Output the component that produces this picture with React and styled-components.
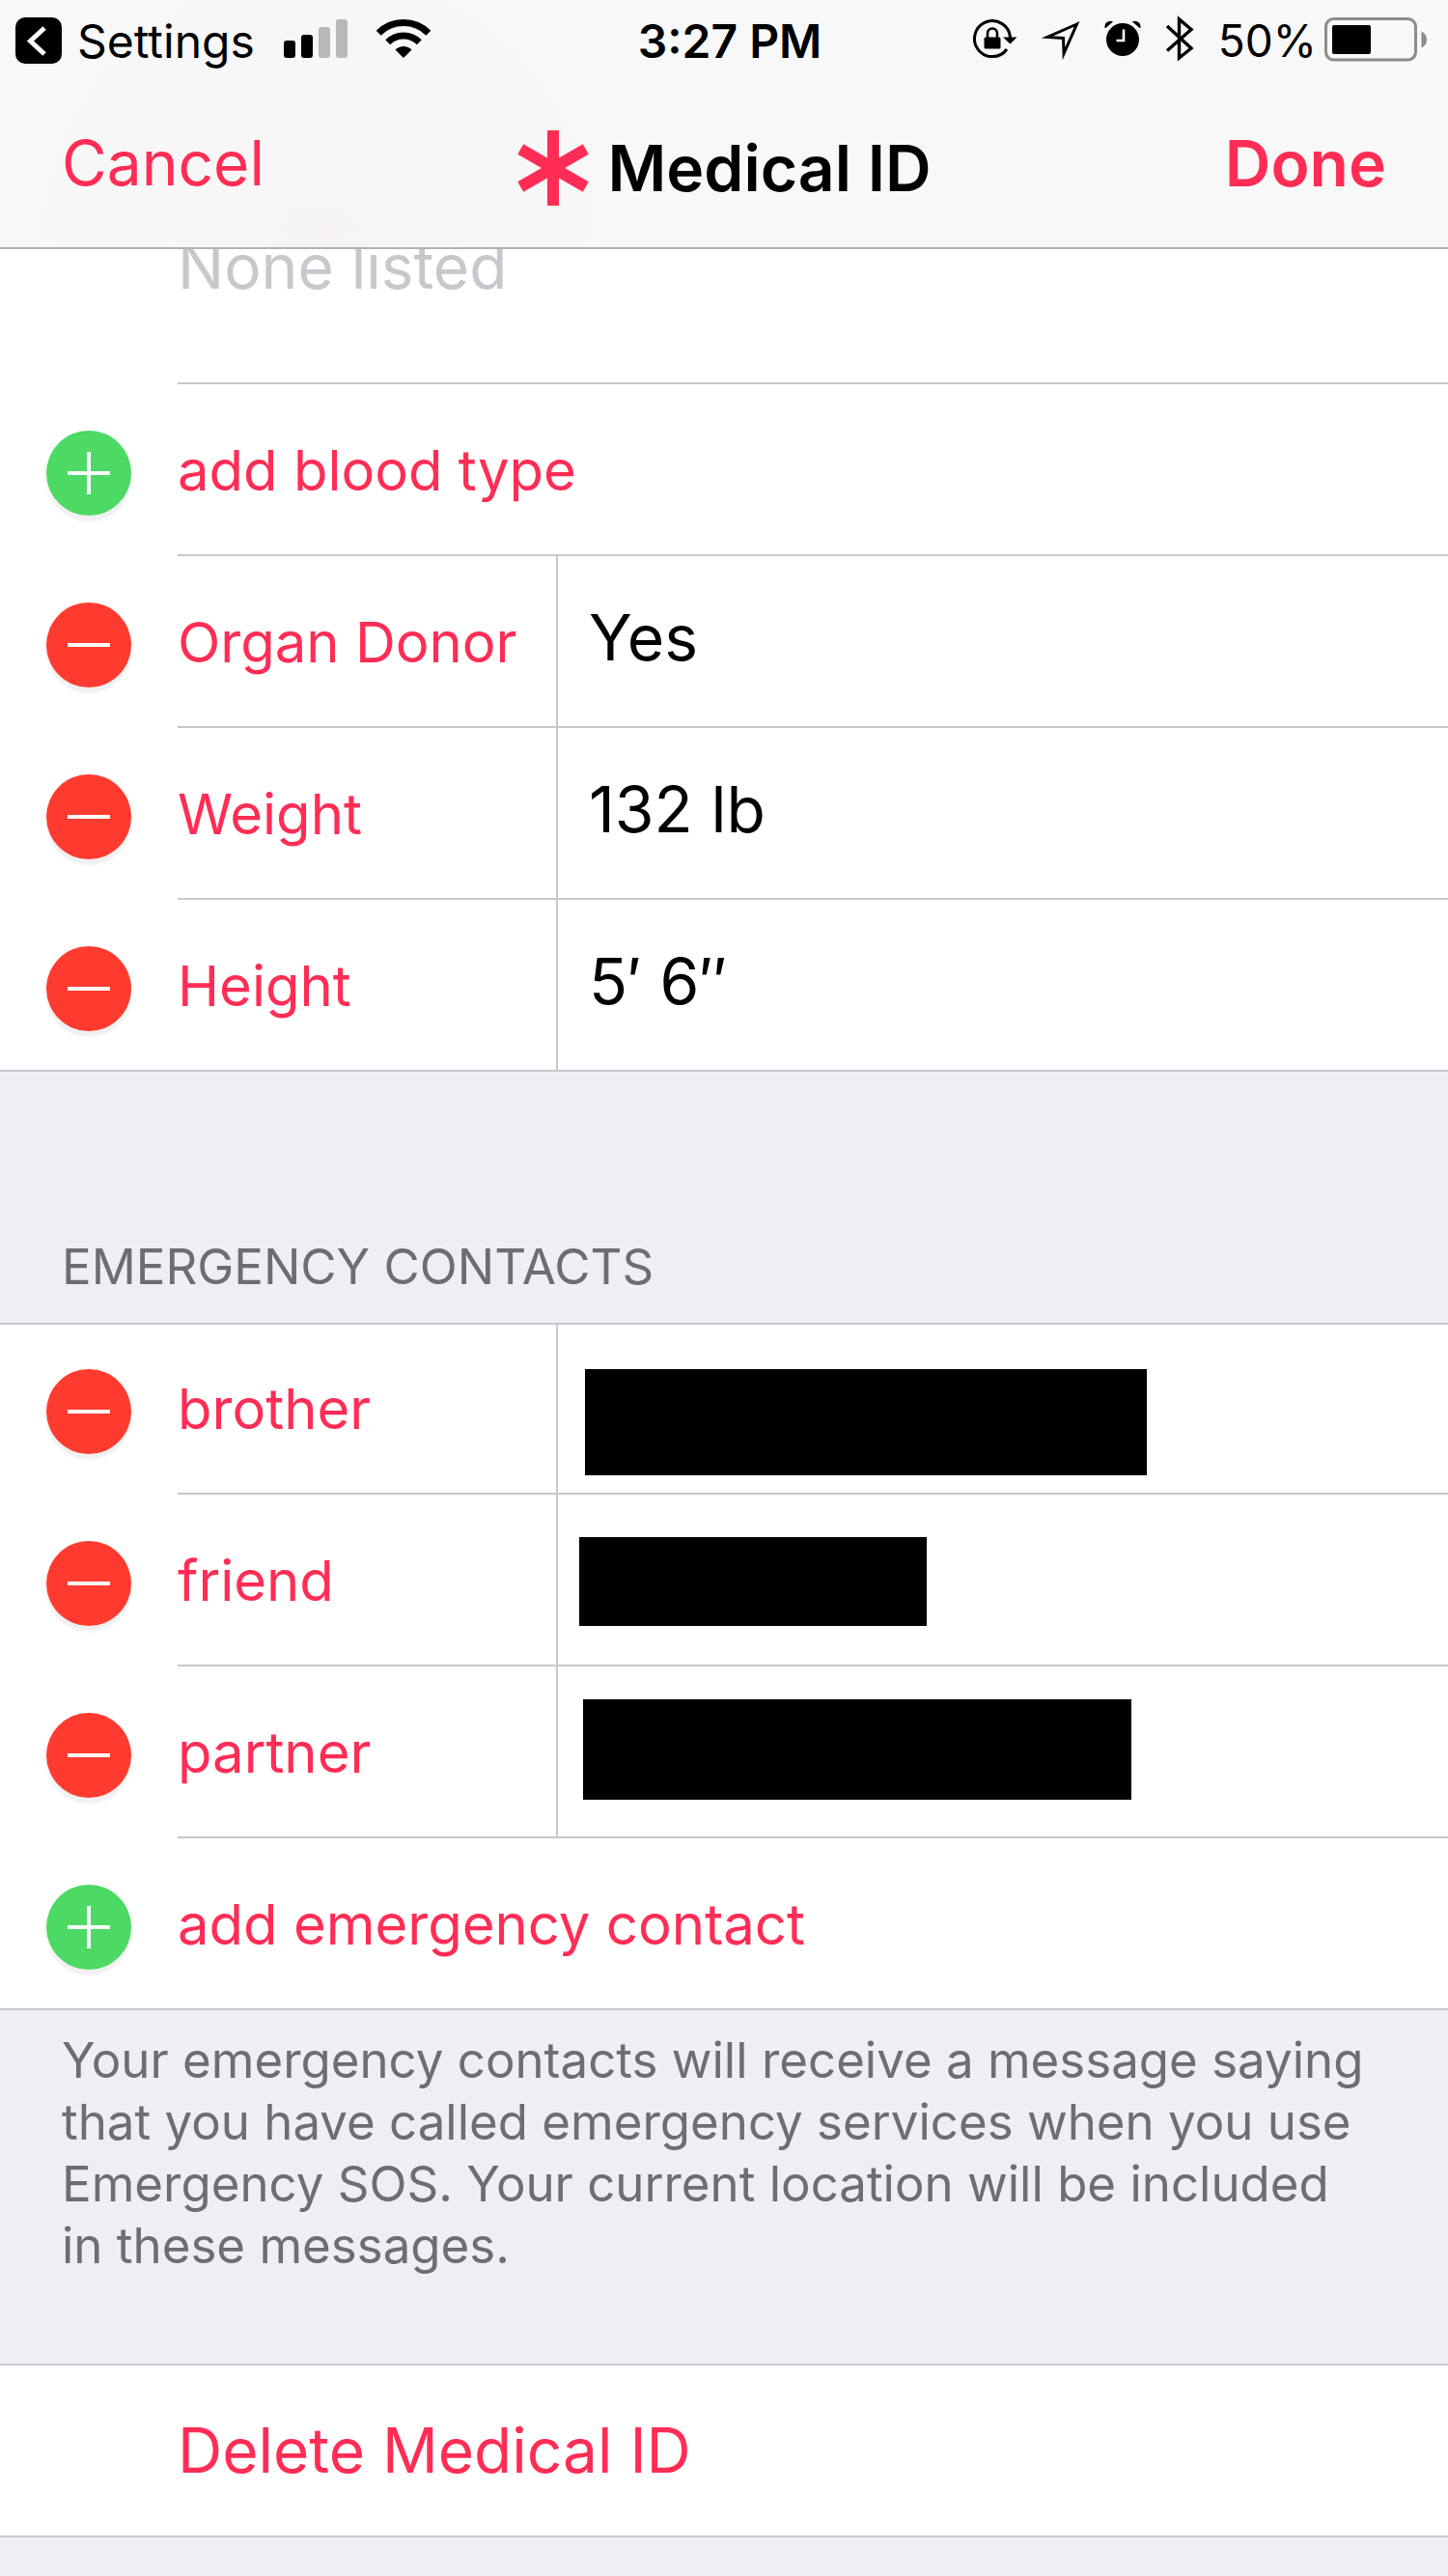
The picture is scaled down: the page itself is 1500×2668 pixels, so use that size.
import styled, { createGlobalStyle } from 'styled-components';

const GlobalStyle = createGlobalStyle`
  * {
    box-sizing: border-box;
  }
  body {
    margin: 0;
    background: #efeef4;
    font-family: Inter, 'Liberation Sans', sans-serif;
    color: #000;
  }
  button,
  input {
    font-family: inherit;
    border: none;
    background: none;
    padding: 0;
    margin: 0;
  }
  button {
    cursor: pointer;
  }
  svg {
    display: block;
    flex: none;
    overflow: visible;
  }
`;

const Header = styled.header`
  position: sticky;
  top: 0;
  z-index: 10;
  border-bottom: 2px solid #b2b2b4;
  background:
    radial-gradient(circle at 22% 100%, rgba(255, 45, 85, 0.02), transparent 320px),
    #f8f8f9;
`;

const StatusBar = styled.div`
  display: grid;
  grid-template-columns: 1fr auto 1fr;
  align-items: center;
  height: 84px;
  padding: 0 4px 0 16px;
  font-size: 48px;
`;

const StatusLeft = styled.div`
  display: flex;
  align-items: center;
  gap: 30px;
`;

const StatusRight = styled.div`
  display: flex;
  align-items: center;
  justify-content: flex-end;
  gap: 26px;
  padding-right: 18px;
`;

const BackLink = styled.a`
  display: flex;
  align-items: center;
  gap: 16px;
  color: #000;
  text-decoration: none;
`;

const Time = styled.time`
  font-weight: 600;
`;

const Battery = styled.div`
  display: flex;
  align-items: center;
  gap: 8px;
  font-size: 46px;
`;

const NavBar = styled.nav`
  display: grid;
  grid-template-columns: 1fr auto 1fr;
  align-items: center;
  height: 172px;
  padding: 0 64px 2px;
`;

const NavButton = styled.button`
  justify-self: ${({ $end }) => ($end ? 'end' : 'start')};
  font-size: ${({ $end }) => ($end ? 66 : 64)}px;
  font-weight: ${({ $end }) => ($end ? 600 : 400)};
  line-height: 80px;
  color: #ff2d55;
`;

const Title = styled.h1`
  display: flex;
  align-items: center;
  gap: 18px;
  margin: 0;
  padding-top: 10px;
  font-size: 66px;
  font-weight: 600;
  line-height: 80px;
`;

/* first row slides under the header, as if scrolled */
const Main = styled.main`
  margin-top: -38px;
`;

const Section = styled.section`
  background: #fff;
  box-shadow: inset 0 2px #c8c7cc;
`;

const Row = styled.div`
  display: grid;
  grid-template-columns: 184px 1fr;
  height: 178px;
  border-bottom: ${({ $last }) => ($last ? '2px solid #c8c7cc' : 'none')};
`;

const RowBody = styled.div`
  position: relative;
  display: flex;
  align-items: center;
  min-width: 0;
  border-bottom: ${({ $last }) => ($last ? 'none' : '2px solid #c8c7cc')};
`;

const Placeholder = styled.p`
  align-self: flex-start;
  margin: 0;
  padding-top: 16px;
  font-size: 64px;
  line-height: 80px;
  color: #c7c7cc;
`;

const RoundButton = styled.button`
  display: grid;
  place-items: center;
  width: 88px;
  height: 88px;
  margin: 48px 0 0 48px;
  border-radius: 50%;
  background: ${({ $add }) => ($add ? '#4cd964' : '#ff3b30')};
  box-shadow: 0 6px 3px #f0f0f0;
`;

const Label = styled.label`
  display: flex;
  align-items: center;
  flex: none;
  width: 394px;
  height: 100%;
  padding-top: 2px;
  border-right: 2px solid #c8c7cc;
  font-size: 58px;
  white-space: nowrap;
  color: #ff2d55;
`;

const AddButton = styled.button`
  padding-top: 2px;
  font-size: 58px;
  color: #ff2d55;
`;

const Value = styled.input`
  flex: 1;
  min-width: 0;
  height: 100%;
  padding: 0 32px 8px;
  font-size: 66px;
  color: #000;
  outline: none;
`;

/* marker stroke drawn over the contact's name */
const Redaction = styled.span`
  position: absolute;
  left: ${({ $x }) => $x}px;
  top: ${({ $y }) => $y}px;
  width: ${({ $w }) => $w}px;
  height: ${({ $h }) => $h}px;
  background: #000;
`;

const SectionTitle = styled.h2`
  margin: 0;
  padding: 170px 64px 26px;
  font-size: 51px;
  font-weight: 400;
  line-height: 64px;
  color: #6d6d72;
`;

const Note = styled.p`
  margin: 0;
  padding: 20px 84px 90px 64px;
  font-size: 51px;
  line-height: 64px;
  color: #6d6d72;
`;

const DeleteButton = styled.button`
  display: block;
  width: 100%;
  height: 180px;
  padding: 0 184px;
  border-bottom: 2px solid #c8c7cc;
  font-size: 64px;
  text-align: left;
  color: #ff2d55;
`;

const BackIcon = () => (
  <svg width="48" height="48" viewBox="0 0 48 48">
    <rect width="48" height="48" rx="10" />
    <path d="M30 11 15.500 24.500 30 38" fill="none" stroke="#fff" strokeWidth="5" />
  </svg>
);

const SignalIcon = () => (
  <svg width="66" height="48" viewBox="0 0 66 48">
    <rect x="0" y="24" width="12" height="18" rx="3" />
    <rect x="18" y="18" width="12" height="24" rx="3" />
    <rect x="36" y="10" width="12" height="32" rx="3" fill="#b8b8b8" />
    <rect x="54" y="2" width="12" height="40" rx="3" fill="#b8b8b8" />
  </svg>
);

const WifiIcon = () => (
  <svg width="56" height="48" viewBox="0 0 56 48">
    <g fill="none" stroke="#000" strokeWidth="7">
      <path d="M2.200 16.200A36.500 36.500 0 0 1 53.800 16.200" />
      <path d="M11.700 25.700A23 23 0 0 1 44.300 25.700" />
    </g>
    <path d="M28 42 19.500 33.500A12 12 0 0 1 36.500 33.500Z" />
  </svg>
);

const RotationLockIcon = () => (
  <svg width="46" height="48" viewBox="0 0 46 48">
    <path d="M38.500 21A18.500 18.500 0 1 0 35 33" fill="none" stroke="#000" strokeWidth="3" />
    <path d="M31 20.500H45.500L38.500 27.500Z" />
    <rect x="11.500" y="20.500" width="17" height="12" rx="1.500" />
    <path d="M15 21V16.500a5 5 0 0 1 10 0V21" fill="none" stroke="#000" strokeWidth="2.600" />
  </svg>
);

const LocationIcon = () => (
  <svg width="38" height="48" viewBox="0 0 38 48">
    <path
      d="M35.500 7 5 20.500 21.500 21.500 22 37.500Z"
      fill="none"
      stroke="#000"
      strokeWidth="3"
      strokeMiterlimit="8"
    />
  </svg>
);

const AlarmIcon = () => (
  <svg width="38" height="48" viewBox="0 0 38 48">
    <circle cx="19" cy="23" r="17" />
    <path d="M.500 11C0 5.500 4 3 9 4.500L1.500 11ZM37.500 11C38 5.500 34 3 29 4.500L36.500 11Z" />
    <path d="M12.500 24H20V12.500" fill="none" stroke="#fff" strokeWidth="2.600" />
  </svg>
);

const BluetoothIcon = () => (
  <svg width="28" height="48" viewBox="0 0 28 48">
    <path
      d="M1 9 26 32 13.500 42V2L26 12.500 1 34.500"
      fill="none"
      stroke="#000"
      strokeWidth="3.400"
    />
  </svg>
);

const BatteryIcon = () => (
  <svg width="106" height="48" viewBox="0 0 106 48">
    <rect x="1.500" y="1.500" width="93" height="42.500" rx="8" fill="none" stroke="#8c8c8c" strokeWidth="3" />
    <rect x="8" y="8" width="40" height="30" rx="2" />
    <path d="M100.500 14.500Q106 17 106 23T100.500 31.500Z" fill="#8c8c8c" />
  </svg>
);

const AsteriskIcon = () => (
  <svg width="76" height="80" viewBox="0 0 76 80">
    <g stroke="#ff2d55" strokeWidth="12">
      <path d="M38 1V79" />
      <path d="M38 1V79" transform="rotate(60 38 40)" />
      <path d="M38 1V79" transform="rotate(-60 38 40)" />
    </g>
  </svg>
);

const SignIcon = ({ add }) => (
  <svg width="44" height="44" viewBox="0 0 44 44">
    <path d={add ? 'M0 22H44M22 0V44' : 'M0 22H44'} stroke="#fff" strokeWidth="4" />
  </svg>
);

const details = [
  { id: 'organ-donor', label: 'Organ Donor', value: 'Yes' },
  { id: 'weight', label: 'Weight', value: '132 lb' },
  { id: 'height', label: 'Height', value: '5′ 6″' },
];

const contacts = [
  { id: 'brother', label: 'brother', mark: { x: 422, y: 48, w: 582, h: 110 } },
  { id: 'friend', label: 'friend', mark: { x: 416, y: 44, w: 360, h: 92 } },
  { id: 'partner', label: 'partner', mark: { x: 420, y: 34, w: 568, h: 104 } },
];

function AddRow({ children, last }) {
  return (
    <Row $last={last}>
      <RoundButton $add aria-label={children}>
        <SignIcon add />
      </RoundButton>
      <RowBody $last={last}>
        <AddButton>{children}</AddButton>
      </RowBody>
    </Row>
  );
}

function FieldRow({ id, label, value, mark, last }) {
  return (
    <Row $last={last}>
      <RoundButton aria-label={`Remove ${label}`}>
        <SignIcon />
      </RoundButton>
      <RowBody $last={last}>
        <Label htmlFor={id}>{label}</Label>
        <Value id={id} type="text" defaultValue={value} />
        {mark && <Redaction $x={mark.x} $y={mark.y} $w={mark.w} $h={mark.h} />}
      </RowBody>
    </Row>
  );
}

export default function App() {
  return (
    <>
      <GlobalStyle />
      <Header>
        <StatusBar>
          <StatusLeft>
            <BackLink href="#settings">
              <BackIcon />
              Settings
            </BackLink>
            <SignalIcon />
            <WifiIcon />
          </StatusLeft>
          <Time>3:27 PM</Time>
          <StatusRight>
            <RotationLockIcon />
            <LocationIcon />
            <AlarmIcon />
            <BluetoothIcon />
            <Battery>
              50%
              <BatteryIcon />
            </Battery>
          </StatusRight>
        </StatusBar>
        <NavBar>
          <NavButton>Cancel</NavButton>
          <Title>
            <AsteriskIcon />
            Medical ID
          </Title>
          <NavButton $end>Done</NavButton>
        </NavBar>
      </Header>

      <Main>
        <Section>
          <Row>
            <span />
            <RowBody>
              <Placeholder>None listed</Placeholder>
            </RowBody>
          </Row>
          <AddRow>add blood type</AddRow>
          {details.map((item, i) => (
            <FieldRow key={item.id} {...item} last={i === details.length - 1} />
          ))}
        </Section>

        <SectionTitle>EMERGENCY CONTACTS</SectionTitle>
        <Section>
          {contacts.map((item) => (
            <FieldRow key={item.id} {...item} />
          ))}
          <AddRow last>add emergency contact</AddRow>
        </Section>
        <Note>
          Your emergency contacts will receive a message saying that you have called emergency
          services when you use Emergency SOS. Your current location will be included in these
          messages.
        </Note>

        <Section>
          <DeleteButton>Delete Medical ID</DeleteButton>
        </Section>
      </Main>
    </>
  );
}
